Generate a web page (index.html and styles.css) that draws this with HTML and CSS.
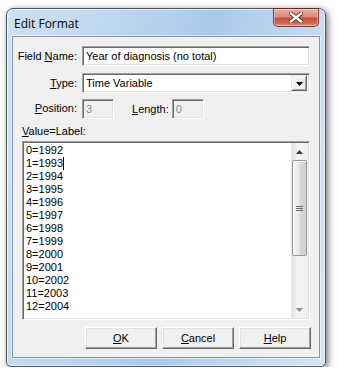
FILE: index.html
```html
<!DOCTYPE html>
<html>
<head>
<meta charset="utf-8">
<link rel="stylesheet" href="styles.css">
</head>
<body>
<div class="window">
  <div class="titlebar">
    <span class="title">Edit Format</span>
    <div class="close">
      <svg width="14" height="11" viewBox="0 0 14 11">
        <path d="M2 1.5 L12 9.5 M12 1.5 L2 9.5" stroke="#5a2a24" stroke-width="4.2" stroke-linecap="square" fill="none"/>
        <path d="M2 1.5 L12 9.5 M12 1.5 L2 9.5" stroke="#ffffff" stroke-width="2.4" stroke-linecap="square" fill="none"/>
      </svg>
    </div>
  </div>
  <div class="client">
    <div class="form">
      <label class="lbl">Field <u>N</u>ame:</label>
      <div class="field edit">Year of diagnosis (no total)</div>

      <label class="lbl lbl-type"><u>T</u>ype:</label>
      <div class="field combo">
        <span>Time Variable</span>
        <span class="dropbtn"><svg width="7" height="4" viewBox="0 0 7 4"><path d="M0 0 H7 L3.5 4 Z" fill="#000"/></svg></span>
      </div>

      <label class="lbl lbl-pos"><u>P</u>osition:</label>
      <div class="posrow">
        <div class="field small disabled">3</div>
        <label class="lbl-len"><u>L</u>ength:</label>
        <div class="field small disabled">0</div>
      </div>
    </div>

    <div class="vl-label"><u>V</u>alue=Label:</div>

    <div class="textarea">
      <div class="lines">
        <div>0=1992</div>
        <div>1=1993<span class="caret"></span></div>
        <div>2=1994</div>
        <div>3=1995</div>
        <div>4=1996</div>
        <div>5=1997</div>
        <div>6=1998</div>
        <div>7=1999</div>
        <div>8=2000</div>
        <div>9=2001</div>
        <div>10=2002</div>
        <div>11=2003</div>
        <div>12=2004</div>
      </div>
      <div class="scrollbar">
        <div class="arrow"><svg width="7" height="4" viewBox="0 0 7 4"><path d="M0 4 H7 L3.5 0 Z" fill="#3a3a3a"/></svg></div>
        <div class="track">
          <div class="thumb"><span class="grip"></span></div>
        </div>
        <div class="arrow"><svg width="7" height="4" viewBox="0 0 7 4"><path d="M0 0 H7 L3.5 4 Z" fill="#8a8a8a"/></svg></div>
      </div>
    </div>

    <div class="buttons">
      <button class="btn"><u>O</u>K</button>
      <button class="btn"><u>C</u>ancel</button>
      <button class="btn"><u>H</u>elp</button>
    </div>
  </div>
</div>
</body>
</html>
```

FILE: styles.css
```css
html, body {
  margin: 0;
  padding: 0;
  background: #ffffff;
}

body {
  font-family: "Liberation Sans", Arial, sans-serif;
  font-size: 11px;
  color: #000;
}

.window {
  position: relative;
  margin: 8px 0 0 6px;
  width: 320px;
  height: 359px;
  box-sizing: border-box;
  border: 1px solid #4e5661;
  border-radius: 7px 7px 5px 5px;
  background: linear-gradient(100deg, #cfe1f3 0%, #bcd6ef 30%, #a9c9ea 55%, #c2daf1 80%, #d4e5f5 100%);
  box-shadow: 2px 2px 7px rgba(0, 0, 0, 0.55), inset 0 0 0 1px rgba(255, 255, 255, 0.6);
  display: flex;
  flex-direction: column;
}

.titlebar {
  height: 27px;
  display: flex;
  align-items: center;
  padding-left: 7px;
}

.title {
  font-family: "Open Sans", "Noto Sans", sans-serif;
  font-size: 12px;
  color: #000;
  margin-top: 1px;
}

.close {
  position: absolute;
  top: -1px;
  right: 6px;
  width: 46px;
  height: 19px;
  box-sizing: border-box;
  border: 1px solid #7b3a30;
  border-top-color: #6a2e26;
  border-radius: 0 0 5px 5px;
  background: linear-gradient(180deg, #eab1a6 0%, #db8a7b 45%, #c64c3b 55%, #cf6a55 85%, #e29a86 100%);
  box-shadow: inset 0 0 0 1px rgba(255, 230, 225, 0.5);
  display: flex;
  align-items: center;
  justify-content: center;
}

.close svg {
  display: block;
}

.client {
  margin: 0 5px;
  height: 322px;
  box-sizing: border-box;
  border: 1px solid #8594a8;
  background: #f0f0f0;
  box-shadow: 0 0 0 1px rgba(255, 255, 255, 0.55);
  display: flex;
  flex-direction: column;
}

.form {
  display: grid;
  grid-template-columns: 64px 228px;
  column-gap: 5px;
  padding-top: 9px;
  row-gap: 7px;
}

.lbl {
  text-align: right;
  align-self: center;
  line-height: 13px;
}

.lbl-pos {
  margin-top: -2px;
}

.field {
  box-sizing: border-box;
  height: 20px;
  border-style: solid;
  border-width: 1px;
  border-color: #a0a0a0 #fff #fff #a0a0a0;
  box-shadow: inset 1px 1px 0 #696969, inset -1px -1px 0 #e3e3e3;
  background: #fff;
  line-height: 18px;
  padding-left: 3px;
  white-space: nowrap;
  overflow: hidden;
}

.combo {
  display: flex;
  justify-content: space-between;
  padding-right: 2px;
}

.dropbtn {
  margin-top: 1px;
  width: 16px;
  height: 16px;
  box-sizing: border-box;
  background: #f0f0f0;
  border: 1px solid;
  border-color: #e3e3e3 #696969 #696969 #e3e3e3;
  box-shadow: inset 1px 1px 0 #fff, inset -1px -1px 0 #a0a0a0;
  display: flex;
  align-items: center;
  justify-content: center;
}

.dropbtn svg {
  display: block;
  margin-top: 1px;
}

.posrow {
  display: flex;
  align-items: center;
  margin-top: -1px;
}

.small {
  width: 32px;
}

.disabled {
  background: #f0f0f0;
  color: #8d8d8d;
}

.lbl-len {
  margin: 0 3px 0 18px;
}

.vl-label {
  padding-left: 9px;
  margin-top: 6px;
  line-height: 13px;
}

.textarea {
  margin: 3px 0 0 9px;
  width: 288px;
  height: 179px;
  box-sizing: border-box;
  border: 1px solid;
  border-color: #a0a0a0 #fff #fff #a0a0a0;
  box-shadow: inset 1px 1px 0 #696969, inset -1px -1px 0 #e3e3e3;
  background: #fff;
  display: flex;
  padding: 1px;
}

.lines {
  flex: 1;
  padding: 1px 0 0 2px;
  line-height: 13px;
}

.caret {
  display: inline-block;
  width: 1px;
  height: 13px;
  background: #000;
  vertical-align: top;
}

.scrollbar {
  width: 17px;
  display: flex;
  flex-direction: column;
  background: linear-gradient(90deg, #e4e4e4, #f4f4f4 40%, #f0f0f0);
}

.arrow {
  height: 17px;
  display: flex;
  align-items: center;
  justify-content: center;
}

.arrow svg {
  display: block;
}

.track {
  flex: 1;
  padding: 0 1px;
}

.thumb {
  height: 96px;
  box-sizing: border-box;
  border: 1px solid #989898;
  border-radius: 2px;
  background: linear-gradient(90deg, #f4f4f4 0%, #e9e9e9 45%, #d8d8d8 55%, #cfcfcf 100%);
  box-shadow: inset 1px 1px 0 #fbfbfb;
  display: flex;
  align-items: center;
  justify-content: center;
}

.grip {
  width: 7px;
  height: 5px;
  background: repeating-linear-gradient(180deg, #6a6a6a 0 1px, transparent 1px 2px);
}

.buttons {
  display: flex;
  gap: 5px;
  padding-left: 72px;
  margin-top: 7px;
}

.btn {
  font-family: "Liberation Sans", Arial, sans-serif;
  font-size: 11px;
  color: #000;
  width: 72px;
  height: 22px;
  box-sizing: border-box;
  padding: 0;
  background: #f0f0f0;
  border: 1px solid;
  border-color: #fff #696969 #696969 #fff;
  box-shadow: inset -1px -1px 0 #a0a0a0, inset 1px 1px 0 #e3e3e3;
}
```
